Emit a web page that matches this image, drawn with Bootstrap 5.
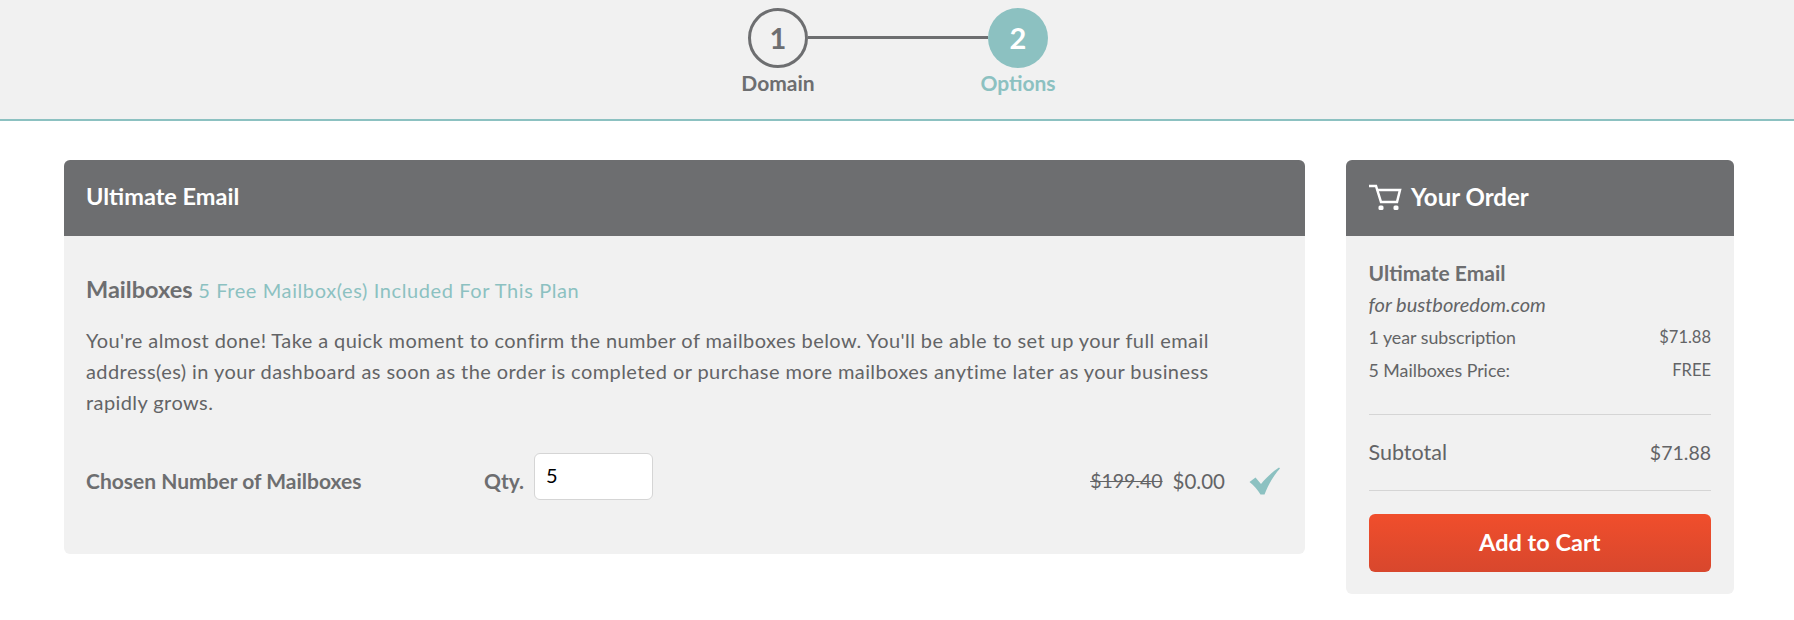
<!DOCTYPE html>
<html lang="en">
<head>
<meta charset="utf-8">
<title>Ultimate Email</title>
<link rel="stylesheet" href="https://cdn.jsdelivr.net/npm/bootstrap@5.3.0/dist/css/bootstrap.min.css">
<style>
body{font-family:"Lato","Open Sans","Liberation Sans",sans-serif;color:#636466;background:#fff;overflow:hidden;}
.stepband{height:121px;background:#f1f1f1;border-bottom:2px solid #8cc1c1;}
.stepwrap{width:342px;margin:0 auto;padding:8px 0 0 2px;}
.stepitem{width:120px;flex:none;}
.stepdot{width:60px;height:60px;border-radius:50%;font-size:29px;font-weight:700;}
.dot-done{border:3px solid #6d6e70;color:#6d6e70;}
.dot-now{background:#8cc1c1;color:#fff;}
.steplink{height:3px;background:#6d6e70;width:180px;margin:28px -30px 0;flex:none;position:relative;z-index:1;}
.steplabel{font-size:21px;font-weight:700;line-height:30px;}
.step-a{color:#6d6e70;}
.step-b{color:#8cc1c1;}
.pagewrap{padding:39px 60px 0 64px;gap:41px;}
.pane{background:#f1f1f1;border:0;border-radius:6px;overflow:hidden;}
.pane-main{width:1241px;height:394px;flex:none;}
.pane-side{width:388px;height:434px;flex:none;}
.panehead{height:76px;background:#6d6e70;color:#fff;font-weight:700;padding:0 22px 3px;}
.headmain{font-size:23.500px;}
.headside{font-size:24px;gap:9px;}
.mainbody{padding:38px 22px 0;}
.mb-title{font-size:23.500px;font-weight:700;color:#6d6e70;line-height:30px;margin:0 0 20px;}
.mb-sub{font-size:20px;font-weight:400;color:#8cc1c1;letter-spacing:.6px;}
.mb-copy{font-size:20px;letter-spacing:.42px;line-height:31px;margin:0;max-width:1160px;}
.qtyrow{margin-top:34px;height:48px;padding-right:3px;}
.qtyname{width:398px;font-size:21px;font-weight:700;color:#6d6e70;flex:none;margin-top:10px;}
.qtylbl{font-size:21px;font-weight:700;color:#6d6e70;margin-top:10px;}
.qtyinput{width:119px;height:47px;margin-left:10px;border:1px solid #d5d5d5;border-radius:6px;background:#fff;color:#000;padding:0 11px 3px;font-size:20px;}
.prices{font-size:19.500px;margin-top:10px;}
.priceold{margin-right:2px;}
.pricenew{font-size:20.500px;}
.sidebody{padding:22px 23px 0 22.500px;}
.sd-title{font-size:21px;font-weight:700;color:#6d6e70;line-height:30px;}
.sd-for{font-size:20px;font-style:italic;line-height:33px;}
.sd-line{font-size:17.800px;line-height:33px;}
.sd-val{font-size:16.500px;}
.sd-rule{border-top:1px solid #d5d5d5;}
.sd-gap{margin-top:27px;}
.sd-total{font-size:21.500px;height:75px;}
.sd-totalval{font-size:19.500px;}
.addcart{height:58px;background:linear-gradient(#f04e2c,#d8472d);border:0;border-radius:6px;color:#fff;font-size:23.500px;font-weight:700;margin-top:23px;}
.addcart:hover{color:#fff;}
</style>
</head>
<body>
<div class="stepband">
  <div class="stepwrap d-flex justify-content-center">
    <div class="stepitem d-flex flex-column align-items-center">
      <div class="stepdot dot-done d-flex align-items-center justify-content-center">1</div>
      <div class="steplabel step-a">Domain</div>
    </div>
    <div class="steplink"></div>
    <div class="stepitem d-flex flex-column align-items-center">
      <div class="stepdot dot-now d-flex align-items-center justify-content-center">2</div>
      <div class="steplabel step-b">Options</div>
    </div>
  </div>
</div>
<div class="pagewrap d-flex align-items-start">
  <div class="card pane pane-main">
    <div class="panehead headmain d-flex align-items-center">Ultimate Email</div>
    <div class="mainbody">
      <h2 class="mb-title">Mailboxes <span class="mb-sub">5 Free Mailbox(es) Included For This Plan</span></h2>
      <p class="mb-copy">You're almost done! Take a quick moment to confirm the number of mailboxes below. You'll be able to set up your full email address(es) in your dashboard as soon as the order is completed or purchase more mailboxes anytime later as your business rapidly grows.</p>
      <div class="qtyrow d-flex align-items-center">
        <div class="qtyname">Chosen Number of Mailboxes</div>
        <div class="qtylbl">Qty.</div>
        <input class="qtyinput" type="text" value="5" aria-label="Quantity">
        <div class="prices ms-auto d-flex align-items-center gap-2">
          <s class="priceold">$199.40</s><span class="pricenew">$0.00</span>
          <svg class="ms-3" width="31" height="29" viewBox="0 0 31 29" aria-hidden="true"><path d="M0.500 15 L6.500 10.500 L12 17 C17 11 23 5 30 0.500 L31 1.500 C25 8 19.500 17 15.500 27.500 L11.500 27.500 C8.500 22.500 5 18.500 0.500 15Z" fill="#8cc1c1"/></svg>
        </div>
      </div>
    </div>
  </div>
  <div class="card pane pane-side">
    <div class="panehead headside d-flex align-items-center">
      <svg width="34" height="26" viewBox="0 0 34 26" fill="none" stroke="#fff" stroke-width="2.500" aria-hidden="true"><path d="M1 2H8L13 18H29L32 6H9"/><rect x="10.500" y="21.500" width="5" height="4.500" rx="1.500" fill="#fff" stroke="none"/><rect x="25.500" y="21.500" width="5" height="4.500" rx="1.500" fill="#fff" stroke="none"/></svg>
      <span>Your Order</span>
    </div>
    <div class="sidebody">
      <div class="sd-title">Ultimate Email</div>
      <div class="sd-for">for bustboredom.com</div>
      <div class="sd-line d-flex justify-content-between"><span>1 year subscription</span><span class="sd-val">$71.88</span></div>
      <div class="sd-line d-flex justify-content-between"><span>5 Mailboxes Price:</span><span class="sd-val">FREE</span></div>
      <div class="sd-rule sd-gap"></div>
      <div class="sd-total d-flex justify-content-between align-items-center"><span>Subtotal</span><span class="sd-totalval">$71.88</span></div>
      <div class="sd-rule"></div>
      <button class="btn addcart w-100" type="button">Add to Cart</button>
    </div>
  </div>
</div>
<script src="https://cdn.jsdelivr.net/npm/bootstrap@5.3.0/dist/js/bootstrap.bundle.min.js"></script>
</body>
</html>
